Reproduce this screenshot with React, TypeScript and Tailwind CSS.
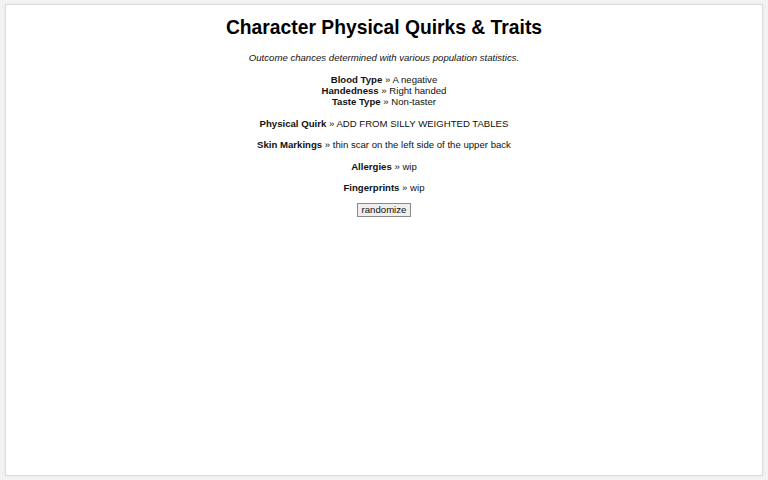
export default function App() {
  const rows: [string, string][] = [
    ["Blood Type", "A negative"],
    ["Handedness", "Right handed"],
    ["Taste Type", "Non-taster"],
  ];
  const singles: [string, string][] = [
    ["Physical Quirk", "ADD FROM SILLY WEIGHTED TABLES"],
    ["Skin Markings", "thin scar on the left side of the upper back"],
    ["Allergies", "wip"],
    ["Fingerprints", "wip"],
  ];
  return (
    <div
      className="h-[480px] w-[768px] bg-[#f3f3f3] pl-[5px] pr-[5px] pt-[4px] pb-[4px]"
      style={{ fontFamily: '"Liberation Sans", Arial, sans-serif' }}
    >
      <div className="flex h-[472px] flex-col items-center border border-[#dcdcdc] bg-white text-[9.6px] leading-[11px] text-[#111] shadow-[0_0_2px_rgba(0,0,0,0.08)]">
        <h1 className="mt-[12px] text-[19.3px] font-bold leading-[22px] text-black">
          Character Physical Quirks &amp; Traits
        </h1>
        <p className="mt-[13px] italic">Outcome chances determined with various population statistics.</p>
        <div className="mt-[11px] flex flex-col items-center">
          {rows.map(([k, v]) => (
            <div key={k}>
              <b>{k}</b> » {v}
            </div>
          ))}
        </div>
        {singles.map(([k, v]) => (
          <p key={k} className="mt-[10.5px]">
            <b>{k}</b> » {v}
          </p>
        ))}
        <button className="mt-[10px] border border-[#8a8a8a] bg-[#efefef] px-[4px] text-[9.6px] leading-[12px]">
          randomize
        </button>
      </div>
    </div>
  );
}
